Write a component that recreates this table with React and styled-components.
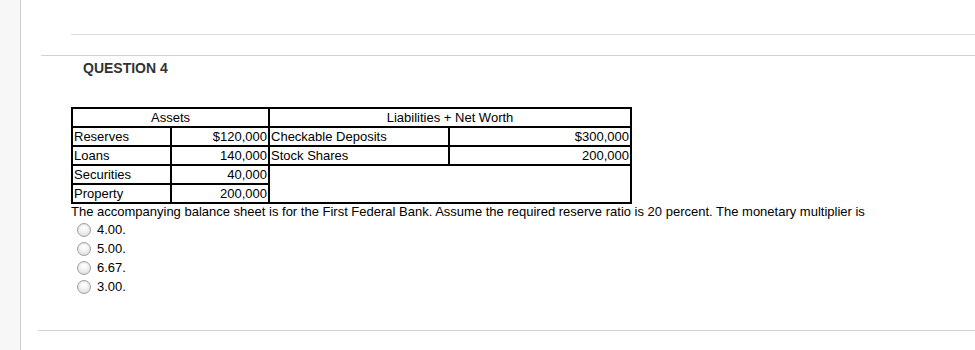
import React from 'react';
import styled, { createGlobalStyle } from 'styled-components';

const GlobalStyle = createGlobalStyle`
  body {
    margin: 0;
    background: #fff;
    font-family: "Liberation Sans", Arial, Helvetica, sans-serif;
  }
`;

const Page = styled.div`
  display: flex;
  min-height: 350px;
`;

const Sidebar = styled.div`
  width: 20px;
  flex-shrink: 0;
  background: #f7f7f7;
  border-right: 1px solid #cfcfcf;
`;

const Main = styled.div`
  flex: 1;
  display: flex;
  flex-direction: column;
  padding-top: 34px;
`;

const Rule = styled.div`
  margin-left: ${(p) => p.indent}px;
  border-top: 1px solid ${(p) => p.color || '#d2d2d2'};
`;

const Heading = styled.h3`
  margin: 4px 0 0 62px;
  font-size: 14px;
  line-height: 17px;
  font-weight: bold;
  color: #333;
`;

const Content = styled.div`
  margin: 30px 0 0 50px;
  font-size: 13px;
  line-height: 15px;
  color: #000;
`;

const Sheet = styled.table`
  width: 559px;
  border-collapse: collapse;
  table-layout: fixed;
`;

const Cell = styled.td`
  border: 2px solid #000;
  padding: 1px;
  height: 15px;
  text-align: ${(p) => p.align || 'left'};
  vertical-align: middle;
  white-space: nowrap;
`;

const Prompt = styled.p`
  margin: 0;
  line-height: 16px;
`;

const Options = styled.div`
  display: flex;
  flex-direction: column;
`;

const Option = styled.label`
  display: flex;
  align-items: center;
  height: 19px;
  padding-left: 6px;
  gap: 6px;
`;

const Radio = styled.input`
  appearance: none;
  margin: 0;
  width: 14px;
  height: 14px;
  border-radius: 50%;
  border: 1px solid #a0a0a0;
  background: radial-gradient(circle at 50% 30%, #ffffff 0%, #f2f2f2 45%, #d4d4d4 100%);
  box-shadow: inset 0 1px 1px rgba(0, 0, 0, 0.08);
  box-sizing: border-box;
`;

const assets = [
  ['Reserves', '$120,000'],
  ['Loans', '140,000'],
  ['Securities', '40,000'],
  ['Property', '200,000'],
];

const liabilities = [
  ['Checkable Deposits', '$300,000'],
  ['Stock Shares', '200,000'],
];

const choices = ['4.00.', '5.00.', '6.67.', '3.00.'];

export default function App() {
  return (
    <>
      <GlobalStyle />
      <Page>
        <Sidebar />
        <Main>
          <Rule indent={50} color="#dcdcdc" />
          <Rule indent={20} style={{ marginTop: 20 }} />
          <Heading>QUESTION 4</Heading>
          <Content>
            <Sheet>
              <colgroup>
                <col style={{ width: 99 }} />
                <col style={{ width: 98 }} />
                <col style={{ width: 180 }} />
                <col style={{ width: 182 }} />
              </colgroup>
              <tbody>
                <tr>
                  <Cell colSpan={2} align="center">Assets</Cell>
                  <Cell colSpan={2} align="center">Liabilities + Net Worth</Cell>
                </tr>
                {assets.map(([name, value], i) => (
                  <tr key={name}>
                    <Cell>{name}</Cell>
                    <Cell align="right">{value}</Cell>
                    {i < 2 && (
                      <>
                        <Cell>{liabilities[i][0]}</Cell>
                        <Cell align="right">{liabilities[i][1]}</Cell>
                      </>
                    )}
                    {i === 2 && <Cell colSpan={2} rowSpan={2} />}
                  </tr>
                ))}
              </tbody>
            </Sheet>
            <Prompt>
              The accompanying balance sheet is for the First Federal Bank. Assume the required reserve ratio is 20 percent. The monetary multiplier is
            </Prompt>
            <Options>
              {choices.map((c) => (
                <Option key={c}>
                  <Radio type="radio" name="q4" />
                  {c}
                </Option>
              ))}
            </Options>
          </Content>
          <Rule indent={17} style={{ marginTop: 34 }} />
        </Main>
      </Page>
    </>
  );
}
